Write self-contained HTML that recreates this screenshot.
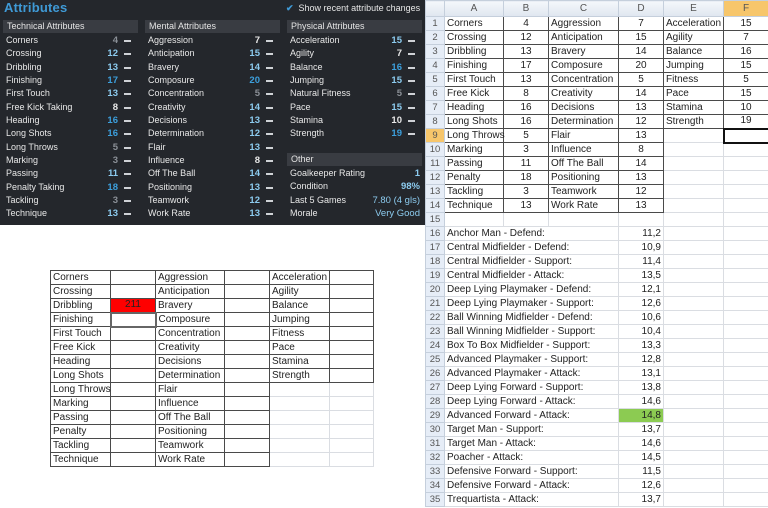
<!DOCTYPE html>
<html><head><meta charset="utf-8"><style>
*{margin:0;padding:0;box-sizing:border-box}
body{width:768px;height:508px;background:#fff;position:relative;overflow:hidden;font-family:"Liberation Sans",sans-serif}
#panel{position:absolute;left:0;top:0;width:425px;height:225px;background:#24272c}
.title{position:absolute;left:4px;top:0px;font-size:13px;font-weight:bold;color:#3f9ad6;letter-spacing:.2px}
.chk{position:absolute;left:286px;top:3px;font-size:9px;color:#e6e6e6}
.chk b{color:#3f9ad6;margin-right:5px;font-size:9px}
.hdr{position:absolute;height:13px;background:#393c42;color:#e4e4e4;font-size:9px;line-height:13px;padding-left:4px}
.col{position:absolute;top:34px;width:135px}
.r{position:relative;height:13.33px;line-height:13.33px;font-size:9px;color:#e8e8e8}
.r .l{position:absolute;left:3px}
.r .v{position:absolute;right:20px;font-weight:bold;font-size:9.5px}
.r .d{position:absolute;left:121px;top:6px;width:7px;height:2px;background:#cfd2d6}
.g{color:#8b9097}.w{color:#e8e8e8}.lb{color:#8ccbef}.db{color:#3c9fdc}
.oth .v{right:2px}
table{border-collapse:collapse;table-layout:fixed;position:absolute;font-size:10px;color:#222}
td{height:14px;padding:0 2px;white-space:nowrap;overflow:visible;border:1px solid #dadde2;line-height:12px}
#xl{left:425px;top:0;width:343px}
#xl td.h{background:#e6edf7;color:#555;text-align:center;border-color:#c5cfdc;font-size:9.5px}
#xl tr.ch td{height:16px;background:linear-gradient(#f4f7fb,#dfe6ef);color:#555;text-align:center;border-color:#c5cfdc}
td.b{border:1px solid #4a4a4a}
.c{text-align:center}.rt{text-align:right}
#bl{left:50px;top:270px;width:323px}
</style></head><body>
<div id="panel">
<div class="title">Attributes</div>
<div class="chk"><b>✔</b>Show recent attribute changes</div>
<div class="hdr" style="left:3px;top:20px;width:135px">Technical Attributes</div>
<div class="hdr" style="left:145px;top:20px;width:135px">Mental Attributes</div>
<div class="hdr" style="left:287px;top:20px;width:135px">Physical Attributes</div>
<div class="hdr" style="left:287px;top:153px;width:135px">Other</div>
<div class="col" style="left:3px">
<div class="r"><span class="l">Corners</span><span class="v g">4</span><i class="d"></i></div>
<div class="r"><span class="l">Crossing</span><span class="v lb">12</span><i class="d"></i></div>
<div class="r"><span class="l">Dribbling</span><span class="v lb">13</span><i class="d"></i></div>
<div class="r"><span class="l">Finishing</span><span class="v db">17</span><i class="d"></i></div>
<div class="r"><span class="l">First Touch</span><span class="v lb">13</span><i class="d"></i></div>
<div class="r"><span class="l">Free Kick Taking</span><span class="v w">8</span><i class="d"></i></div>
<div class="r"><span class="l">Heading</span><span class="v db">16</span><i class="d"></i></div>
<div class="r"><span class="l">Long Shots</span><span class="v db">16</span><i class="d"></i></div>
<div class="r"><span class="l">Long Throws</span><span class="v g">5</span><i class="d"></i></div>
<div class="r"><span class="l">Marking</span><span class="v g">3</span><i class="d"></i></div>
<div class="r"><span class="l">Passing</span><span class="v lb">11</span><i class="d"></i></div>
<div class="r"><span class="l">Penalty Taking</span><span class="v db">18</span><i class="d"></i></div>
<div class="r"><span class="l">Tackling</span><span class="v g">3</span><i class="d"></i></div>
<div class="r"><span class="l">Technique</span><span class="v lb">13</span><i class="d"></i></div>
</div>
<div class="col" style="left:145px">
<div class="r"><span class="l">Aggression</span><span class="v w">7</span><i class="d"></i></div>
<div class="r"><span class="l">Anticipation</span><span class="v lb">15</span><i class="d"></i></div>
<div class="r"><span class="l">Bravery</span><span class="v lb">14</span><i class="d"></i></div>
<div class="r"><span class="l">Composure</span><span class="v db">20</span><i class="d"></i></div>
<div class="r"><span class="l">Concentration</span><span class="v g">5</span><i class="d"></i></div>
<div class="r"><span class="l">Creativity</span><span class="v lb">14</span><i class="d"></i></div>
<div class="r"><span class="l">Decisions</span><span class="v lb">13</span><i class="d"></i></div>
<div class="r"><span class="l">Determination</span><span class="v lb">12</span><i class="d"></i></div>
<div class="r"><span class="l">Flair</span><span class="v lb">13</span><i class="d"></i></div>
<div class="r"><span class="l">Influence</span><span class="v w">8</span><i class="d"></i></div>
<div class="r"><span class="l">Off The Ball</span><span class="v lb">14</span><i class="d"></i></div>
<div class="r"><span class="l">Positioning</span><span class="v lb">13</span><i class="d"></i></div>
<div class="r"><span class="l">Teamwork</span><span class="v lb">12</span><i class="d"></i></div>
<div class="r"><span class="l">Work Rate</span><span class="v lb">13</span><i class="d"></i></div>
</div>
<div class="col" style="left:287px">
<div class="r"><span class="l">Acceleration</span><span class="v lb">15</span><i class="d"></i></div>
<div class="r"><span class="l">Agility</span><span class="v w">7</span><i class="d"></i></div>
<div class="r"><span class="l">Balance</span><span class="v db">16</span><i class="d"></i></div>
<div class="r"><span class="l">Jumping</span><span class="v lb">15</span><i class="d"></i></div>
<div class="r"><span class="l">Natural Fitness</span><span class="v g">5</span><i class="d"></i></div>
<div class="r"><span class="l">Pace</span><span class="v lb">15</span><i class="d"></i></div>
<div class="r"><span class="l">Stamina</span><span class="v w">10</span><i class="d"></i></div>
<div class="r"><span class="l">Strength</span><span class="v db">19</span><i class="d"></i></div>
</div>
<div class="col oth" style="left:287px;top:167px">
<div class="r"><span class="l">Goalkeeper Rating</span><span class="v lb">1</span></div>
<div class="r"><span class="l">Condition</span><span class="v lb">98%</span></div>
<div class="r"><span class="l">Last 5 Games</span><span class="v lb" style="font-weight:normal">7.80 (4 gls)</span></div>
<div class="r"><span class="l">Morale</span><span class="v lb" style="font-weight:normal">Very Good</span></div>
</div>
</div>

<table id="xl">
<colgroup><col style="width:19px"><col style="width:59px"><col style="width:45px"><col style="width:70px"><col style="width:45px"><col style="width:60px"><col style="width:45px"></colgroup>
<tr class="ch"><td></td><td>A</td><td>B</td><td>C</td><td>D</td><td>E</td><td style="background:#f7c66b">F</td></tr>
<tr><td class="h">1</td><td class="b">Corners</td><td class="b c">4</td><td class="b">Aggression</td><td class="b c">7</td><td class="b">Acceleration</td><td class="b c">15</td></tr>
<tr><td class="h">2</td><td class="b">Crossing</td><td class="b c">12</td><td class="b">Anticipation</td><td class="b c">15</td><td class="b">Agility</td><td class="b c">7</td></tr>
<tr><td class="h">3</td><td class="b">Dribbling</td><td class="b c">13</td><td class="b">Bravery</td><td class="b c">14</td><td class="b">Balance</td><td class="b c">16</td></tr>
<tr><td class="h">4</td><td class="b">Finishing</td><td class="b c">17</td><td class="b">Composure</td><td class="b c">20</td><td class="b">Jumping</td><td class="b c">15</td></tr>
<tr><td class="h">5</td><td class="b">First Touch</td><td class="b c">13</td><td class="b">Concentration</td><td class="b c">5</td><td class="b">Fitness</td><td class="b c">5</td></tr>
<tr><td class="h">6</td><td class="b">Free Kick</td><td class="b c">8</td><td class="b">Creativity</td><td class="b c">14</td><td class="b">Pace</td><td class="b c">15</td></tr>
<tr><td class="h">7</td><td class="b">Heading</td><td class="b c">16</td><td class="b">Decisions</td><td class="b c">13</td><td class="b">Stamina</td><td class="b c">10</td></tr>
<tr><td class="h">8</td><td class="b">Long Shots</td><td class="b c">16</td><td class="b">Determination</td><td class="b c">12</td><td class="b">Strength</td><td class="b c">19</td></tr>
<tr><td class="h" style="background:#f7c66b">9</td><td class="b">Long Throws</td><td class="b c">5</td><td class="b">Flair</td><td class="b c">13</td><td></td><td style="border:2px solid #111"></td></tr>
<tr><td class="h">10</td><td class="b">Marking</td><td class="b c">3</td><td class="b">Influence</td><td class="b c">8</td><td></td><td></td></tr>
<tr><td class="h">11</td><td class="b">Passing</td><td class="b c">11</td><td class="b">Off The Ball</td><td class="b c">14</td><td></td><td></td></tr>
<tr><td class="h">12</td><td class="b">Penalty</td><td class="b c">18</td><td class="b">Positioning</td><td class="b c">13</td><td></td><td></td></tr>
<tr><td class="h">13</td><td class="b">Tackling</td><td class="b c">3</td><td class="b">Teamwork</td><td class="b c">12</td><td></td><td></td></tr>
<tr><td class="h">14</td><td class="b">Technique</td><td class="b c">13</td><td class="b">Work Rate</td><td class="b c">13</td><td></td><td></td></tr>
<tr><td class="h">15</td><td></td><td></td><td></td><td></td><td></td><td></td></tr>
<tr><td class="h">16</td><td colspan="3">Anchor Man - Defend:</td><td class="rt">11,2</td><td></td><td></td></tr>
<tr><td class="h">17</td><td colspan="3">Central Midfielder - Defend:</td><td class="rt">10,9</td><td></td><td></td></tr>
<tr><td class="h">18</td><td colspan="3">Central Midfielder - Support:</td><td class="rt">11,4</td><td></td><td></td></tr>
<tr><td class="h">19</td><td colspan="3">Central Midfielder - Attack:</td><td class="rt">13,5</td><td></td><td></td></tr>
<tr><td class="h">20</td><td colspan="3">Deep Lying Playmaker - Defend:</td><td class="rt">12,1</td><td></td><td></td></tr>
<tr><td class="h">21</td><td colspan="3">Deep Lying Playmaker - Support:</td><td class="rt">12,6</td><td></td><td></td></tr>
<tr><td class="h">22</td><td colspan="3">Ball Winning Midfielder - Defend:</td><td class="rt">10,6</td><td></td><td></td></tr>
<tr><td class="h">23</td><td colspan="3">Ball Winning Midfielder - Support:</td><td class="rt">10,4</td><td></td><td></td></tr>
<tr><td class="h">24</td><td colspan="3">Box To Box Midfielder - Support:</td><td class="rt">13,3</td><td></td><td></td></tr>
<tr><td class="h">25</td><td colspan="3">Advanced Playmaker - Support:</td><td class="rt">12,8</td><td></td><td></td></tr>
<tr><td class="h">26</td><td colspan="3">Advanced Playmaker - Attack:</td><td class="rt">13,1</td><td></td><td></td></tr>
<tr><td class="h">27</td><td colspan="3">Deep Lying Forward - Support:</td><td class="rt">13,8</td><td></td><td></td></tr>
<tr><td class="h">28</td><td colspan="3">Deep Lying Forward - Attack:</td><td class="rt">14,6</td><td></td><td></td></tr>
<tr><td class="h">29</td><td colspan="3">Advanced Forward - Attack:</td><td class="rt" style="background:#8ccb52">14,8</td><td></td><td></td></tr>
<tr><td class="h">30</td><td colspan="3">Target Man - Support:</td><td class="rt">13,7</td><td></td><td></td></tr>
<tr><td class="h">31</td><td colspan="3">Target Man - Attack:</td><td class="rt">14,6</td><td></td><td></td></tr>
<tr><td class="h">32</td><td colspan="3">Poacher - Attack:</td><td class="rt">14,5</td><td></td><td></td></tr>
<tr><td class="h">33</td><td colspan="3">Defensive Forward - Support:</td><td class="rt">11,5</td><td></td><td></td></tr>
<tr><td class="h">34</td><td colspan="3">Defensive Forward - Attack:</td><td class="rt">12,6</td><td></td><td></td></tr>
<tr><td class="h">35</td><td colspan="3">Trequartista - Attack:</td><td class="rt">13,7</td><td></td><td></td></tr>
</table>

<table id="bl">
<colgroup><col style="width:60px"><col style="width:45px"><col style="width:69px"><col style="width:45px"><col style="width:60px"><col style="width:44px"></colgroup>
<tr><td class="b">Corners</td><td class="b"></td><td class="b">Aggression</td><td class="b"></td><td class="b">Acceleration</td><td class="b"></td></tr>
<tr><td class="b">Crossing</td><td class="b"></td><td class="b">Anticipation</td><td class="b"></td><td class="b">Agility</td><td class="b"></td></tr>
<tr><td class="b">Dribbling</td><td class="b c" style="background:#f00">211</td><td class="b">Bravery</td><td class="b"></td><td class="b">Balance</td><td class="b"></td></tr>
<tr><td class="b">Finishing</td><td style="border:2px solid #666"></td><td class="b">Composure</td><td class="b"></td><td class="b">Jumping</td><td class="b"></td></tr>
<tr><td class="b">First Touch</td><td class="b"></td><td class="b">Concentration</td><td class="b"></td><td class="b">Fitness</td><td class="b"></td></tr>
<tr><td class="b">Free Kick</td><td class="b"></td><td class="b">Creativity</td><td class="b"></td><td class="b">Pace</td><td class="b"></td></tr>
<tr><td class="b">Heading</td><td class="b"></td><td class="b">Decisions</td><td class="b"></td><td class="b">Stamina</td><td class="b"></td></tr>
<tr><td class="b">Long Shots</td><td class="b"></td><td class="b">Determination</td><td class="b"></td><td class="b">Strength</td><td class="b"></td></tr>
<tr><td class="b">Long Throws</td><td class="b"></td><td class="b">Flair</td><td class="b"></td><td></td><td></td></tr>
<tr><td class="b">Marking</td><td class="b"></td><td class="b">Influence</td><td class="b"></td><td></td><td></td></tr>
<tr><td class="b">Passing</td><td class="b"></td><td class="b">Off The Ball</td><td class="b"></td><td></td><td></td></tr>
<tr><td class="b">Penalty</td><td class="b"></td><td class="b">Positioning</td><td class="b"></td><td></td><td></td></tr>
<tr><td class="b">Tackling</td><td class="b"></td><td class="b">Teamwork</td><td class="b"></td><td></td><td></td></tr>
<tr><td class="b">Technique</td><td class="b"></td><td class="b">Work Rate</td><td class="b"></td><td></td><td></td></tr>
</table>
</body></html>
